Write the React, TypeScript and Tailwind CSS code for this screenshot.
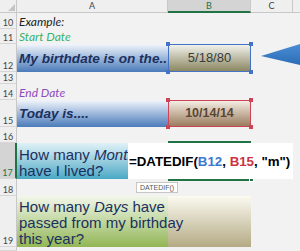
import React from "react";

const navy = "text-[#1b305f]";

function RowHead({ n, active }: { n?: string; active?: boolean }) {
  return (
    <div
      className={`w-[17px] shrink-0 flex items-end justify-center border-b border-[#d6d6d6] text-[9px] leading-[11px] font-['Lato',sans-serif] ${
        active
          ? "bg-[#d4d4d4] text-[#217346] border-r-2 border-r-[#217346]"
          : "bg-[#efefef] text-[#444] border-r border-r-[#c8c8c8]"
      }`}
    >
      {n}
    </div>
  );
}

function Handles({ color }: { color: string }) {
  return (
    <>
      <span className={`absolute -left-[2px] -top-[2px] w-[4px] h-[4px] ${color}`} />
      <span className={`absolute -right-[2px] -top-[2px] w-[4px] h-[4px] ${color}`} />
      <span className={`absolute -left-[2px] -bottom-[2px] w-[4px] h-[4px] ${color}`} />
      <span className={`absolute -right-[2px] -bottom-[2px] w-[4px] h-[4px] ${color}`} />
    </>
  );
}

export default function App() {
  return (
    <div className="relative w-[300px] h-[251px] overflow-hidden bg-[#f2f2f2] font-['Liberation_Sans',Arial,sans-serif]">
      {/* column headers */}
      <div className="flex h-[13px] text-[9px] font-['Lato',sans-serif] text-[#444]">
        <div className="relative w-[17px] shrink-0 bg-[#efefef] border-r border-b border-[#c8c8c8]">
          <svg className="absolute right-[1px] bottom-[1px]" width="7" height="7" viewBox="0 0 7 7">
            <polygon points="7,0 7,7 0,7" fill="#c4c4c4" />
          </svg>
        </div>
        <div className="w-[151px] shrink-0 flex items-center justify-center bg-[#efefef] border-r border-b border-[#c8c8c8]">
          A
        </div>
        <div className="w-[83px] shrink-0 flex items-center justify-center bg-[#d4d4d4] text-[#217346] border-r border-[#c8c8c8] border-b-2 border-b-[#217346]">
          B
        </div>
        <div className="w-[42px] shrink-0 flex items-center justify-center bg-[#efefef] border-r border-b border-[#c8c8c8]">
          C
        </div>
        <div className="flex-1 bg-[#efefef] border-b border-[#c8c8c8]" />
      </div>

      {/* row 10 */}
      <div className="flex h-[16px]">
        <RowHead n="10" />
        <div className="w-[151px] shrink-0 flex items-end pl-[2px] text-[12px] leading-[14px] italic text-[#222] font-['Lato',sans-serif]">
          Example:
        </div>
      </div>

      {/* row 11 */}
      <div className="flex h-[15px]">
        <RowHead n="11" />
        <div className="w-[151px] shrink-0 flex items-end pl-[2px] text-[12px] leading-[14px] italic text-[#36b36c] font-['Lato',sans-serif]">
          Start Date
        </div>
      </div>

      {/* row 12 */}
      <div className="flex h-[28px]">
        <RowHead n="12" />
        <div
          className={`w-[151px] shrink-0 flex items-center pl-[2px] pt-[2px] whitespace-nowrap overflow-hidden bg-linear-to-b from-[#f3f6fb] to-[#4a7bb9] text-[13.6px] font-bold italic ${navy}`}
        >
          My birthdate is on the..
        </div>
        <div className="relative w-[83px] shrink-0 flex items-center justify-center bg-linear-to-b from-[#f6f6f1] to-[#88845e] text-[13px] text-[#3a3a3a]">
          5/18/80
          <span className="absolute inset-0 border-[1.5px] border-[#4472c4]" />
          <Handles color="bg-[#4472c4]" />
        </div>
      </div>

      {/* row 13 */}
      <div className="flex h-[12px]">
        <RowHead n="13" />
      </div>

      {/* row 14 */}
      <div className="flex h-[16px]">
        <RowHead n="14" />
        <div className="w-[151px] shrink-0 flex items-end pl-[2px] text-[12px] leading-[14px] italic text-[#8e4bbd] font-['Lato',sans-serif]">
          End Date
        </div>
      </div>

      {/* row 15 */}
      <div className="flex h-[27px]">
        <RowHead n="15" />
        <div
          className={`w-[151px] shrink-0 flex items-center pl-[2px] pt-[1px] whitespace-nowrap overflow-hidden bg-linear-to-b from-[#f3f6fb] to-[#4a7bb9] text-[13.6px] font-bold italic ${navy}`}
        >
          Today is....
        </div>
        <div className="relative w-[83px] shrink-0 flex items-center justify-center bg-linear-to-b from-[#f8f2ea] to-[#98795a] text-[12.5px] font-bold text-[#5a4633]">
          10/14/14
          <span className="absolute inset-0 border-[1.5px] border-[#cc4455]" />
          <Handles color="bg-[#cc4455]" />
        </div>
      </div>

      {/* row 16 */}
      <div className="flex h-[16px]">
        <RowHead n="16" />
        <div className="w-[151px] shrink-0" />
        <div className="w-[83px] shrink-0 border-b-2 border-[#217346]" />
      </div>

      {/* row 17 - text is cut where the formula editor starts */}
      <div className="flex h-[36px]">
        <RowHead n="17" active />
        <div
          className={`w-[151px] shrink-0 flex items-end pl-[2px] whitespace-nowrap bg-linear-to-b from-[#dff1f7] to-[#48a9c5] text-[15px] leading-[16px] ${navy}`}
        >
          <div className="w-[109px] overflow-hidden">
            How many <i>Months</i>
            <br />
            have I lived?
          </div>
        </div>
        <div className="w-[83px] shrink-0" />
      </div>

      {/* row 18 */}
      <div className="flex h-[17px]">
        <RowHead n="18" />
        <div className="w-[151px] shrink-0" />
        <div className="relative w-[83px] shrink-0 border-t-2 border-[#217346]">
          <span className="absolute -right-[3px] -top-[4px] w-[5px] h-[5px] bg-[#217346] border border-white" />
        </div>
      </div>

      {/* row 19 */}
      <div className="flex h-[51px]">
        <RowHead n="19" />
        <div
          className={`w-[151px] shrink-0 flex items-end pl-[2px] whitespace-nowrap bg-linear-to-b from-[#f2f7ea] to-[#93b653] text-[15px] leading-[16px] ${navy}`}
        >
          <div className="relative z-10">
            How many <i>Days</i> have
            <br />
            passed from my birthday
            <br />
            this year?
          </div>
        </div>
        <div className="w-[83px] shrink-0 bg-linear-to-b from-[#fcfbf2] to-[#b4aa84]" />
      </div>

      {/* row 20 */}
      <div className="flex h-[4px]">
        <RowHead />
      </div>

      {/* in-cell formula editor */}
      <div className="absolute left-[128px] top-[143px] w-[165px] h-[36px] bg-white flex items-center pl-[1px] pt-[2px] text-[13.3px] font-bold text-black whitespace-nowrap">
        =DATEDIF(<span className="text-[#3b78d0]">B12</span>,&nbsp;
        <span className="text-[#cc3344]">B15</span>, "m")
      </div>

      {/* function tooltip */}
      <div className="absolute left-[136px] top-[182px] px-[3px] border border-[#c6c6c6] bg-white text-[7px] leading-[9px] text-[#555]">
        DATEDIF()
      </div>

      {/* callout pointer */}
      <svg className="absolute left-[258px] top-[40px]" width="42" height="30" viewBox="0 0 42 30">
        <defs>
          <linearGradient id="arw" x1="0" y1="0" x2="0" y2="1">
            <stop offset="0" stopColor="#4a8ed6" />
            <stop offset="1" stopColor="#2b6cb5" />
          </linearGradient>
        </defs>
        <polygon points="3,16 42,4 42,25" fill="url(#arw)" />
      </svg>
    </div>
  );
}
